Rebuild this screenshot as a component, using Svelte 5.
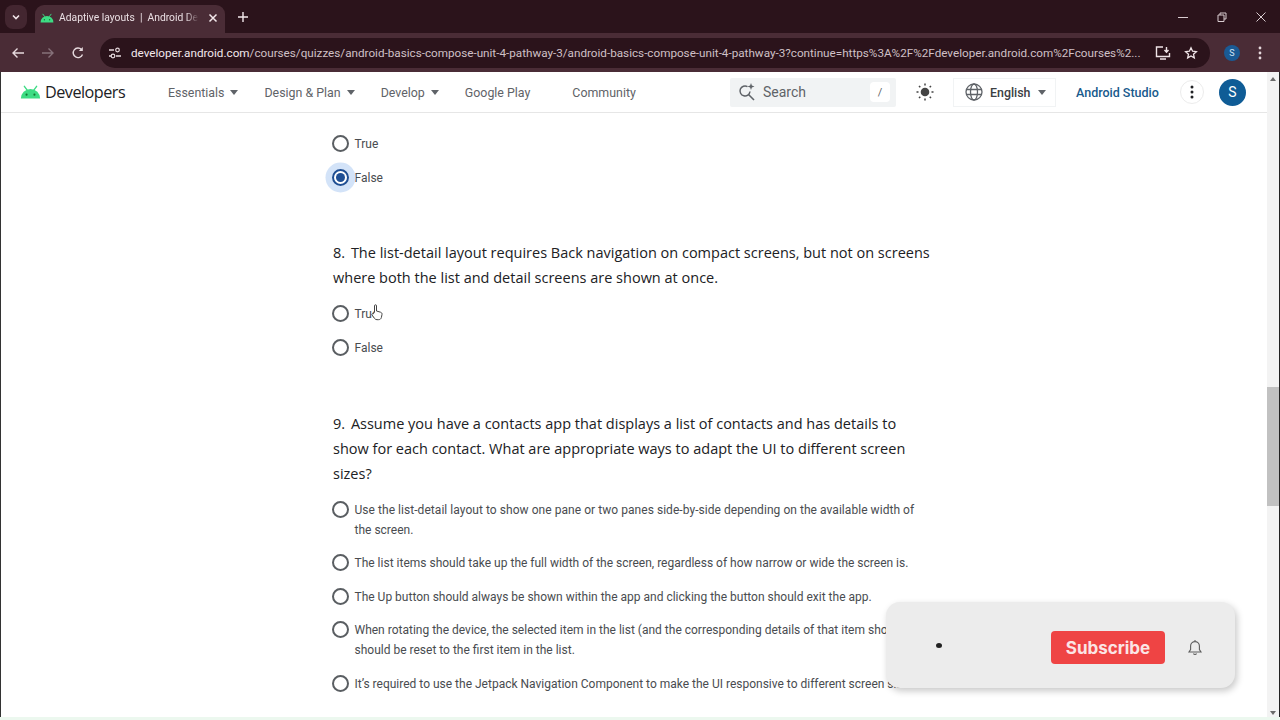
<script>
    const menu = [
        { label: "Essentials", caret: true },
        { label: "Design & Plan", caret: true },
        { label: "Develop", caret: true },
        { label: "Google Play", caret: false },
        { label: "Community", caret: false },
    ];

    const options = [
        { lines: ["Use the list-detail layout to show one pane or two panes side-by-side depending on the available width of", "the screen."] },
        { lines: ["The list items should take up the full width of the screen, regardless of how narrow or wide the screen is."] },
        { lines: ["The Up button should always be shown within the app and clicking the button should exit the app."] },
        { lines: ["When rotating the device, the selected item in the list (and the corresponding details of that item should be retained),", "should be reset to the first item in the list."] },
        { lines: ["It’s required to use the Jetpack Navigation Component to make the UI responsive to different screen sizes."] },
    ];
</script>

{#snippet droid(w, h)}
    <svg width={w} height={h} viewBox="0 0 24 15">
        <path d="M1 15a11 11 0 0 1 22 0z" fill="#3ddc84" />
        <path d="M5 1l3 4M19 1l-3 4" stroke="#3ddc84" stroke-width="1.6" stroke-linecap="round" />
        <circle cx="7.5" cy="10.5" r="1.2" fill="#173" />
        <circle cx="16.5" cy="10.5" r="1.2" fill="#173" />
    </svg>
{/snippet}

{#snippet radio(checked)}
    <span class="radio" class:checked>
        {#if checked}<span class="dot"></span>{/if}
    </span>
{/snippet}

<div class="page">
    <div class="tabstrip">
        <div class="tabsearch">
            <svg width="10" height="10" viewBox="0 0 10 10"><path d="M2 3.5l3 3 3-3" fill="none" stroke="#f0e4e8" stroke-width="1.6" /></svg>
        </div>
        <div class="tab">
            {@render droid(14, 10)}
            <span class="tabtitle">Adaptive layouts&nbsp;&nbsp;|&nbsp;&nbsp;Android Developers</span>
            <svg width="10" height="10" viewBox="0 0 10 10"><path d="M1.5 1.5l7 7M8.5 1.5l-7 7" stroke="#f4e9ec" stroke-width="1.5" /></svg>
        </div>
        <svg class="plus" width="10" height="10" viewBox="0 0 10 10"><path d="M5 0v10M0 5h10" stroke="#f4e9ec" stroke-width="1.4" /></svg>
        <div class="winbtns">
            <svg width="10" height="10" viewBox="0 0 10 10"><path d="M0 5.5h10" stroke="#d9ccd0" stroke-width="1" /></svg>
            <svg width="10" height="10" viewBox="0 0 10 10"><path d="M1 3h6v6.500H1zM3 3V1h6v6H7" fill="none" stroke="#d9ccd0" stroke-width="1" /></svg>
            <svg width="10" height="10" viewBox="0 0 10 10"><path d="M.5.5l9 9M9.500.5l-9 9" stroke="#d9ccd0" stroke-width="1" /></svg>
        </div>
    </div>

    <div class="toolbar">
        <svg width="14" height="14" viewBox="0 0 14 14"><path d="M13 7H2M6.500 2.500L2 7l4.500 4.500" fill="none" stroke="#e6d9dd" stroke-width="1.400" /></svg>
        <svg class="fwd" width="14" height="14" viewBox="0 0 14 14"><path d="M1 7h11M7.500 2.500L12 7l-4.500 4.500" fill="none" stroke="#86717a" stroke-width="1.400" /></svg>
        <svg class="reload" width="14" height="14" viewBox="0 0 14 14"><path d="M11.500 8.500A4.800 4.800 0 1 1 10.500 3.500" fill="none" stroke="#e6d9dd" stroke-width="1.400" /><path d="M11.800 1v4h-4z" fill="#e6d9dd" /></svg>
        <div class="omnibox">
            <span class="tune">
                <svg width="14" height="14" viewBox="0 0 14 14"><path d="M1 4h5M1 10h2M8 10h5" stroke="#e6d9dd" stroke-width="1.300" fill="none" /><circle cx="9.500" cy="4" r="1.800" fill="none" stroke="#e6d9dd" stroke-width="1.200" /><circle cx="5" cy="10" r="1.800" fill="none" stroke="#e6d9dd" stroke-width="1.200" /></svg>
            </span>
            <span class="url"><b>developer.android.com</b>/courses/quizzes/android-basics-compose-unit-4-pathway-3/android-basics-compose-unit-4-pathway-3?continue=https%3A%2F%2Fdeveloper.android.com%2Fcourses%2...</span>
            <svg class="install" width="16" height="14" viewBox="0 0 16 14"><path d="M8 1H1.500v9.500h13V7M11.500 1v5M9.500 4l2 2.200 2-2.200M5 13h6" fill="none" stroke="#efe4e7" stroke-width="1.400" /></svg>
            <svg class="star" width="14" height="14" viewBox="0 0 24 24"><path d="M12 3l2.700 6 6.500.7-4.900 4.300 1.400 6.400L12 17l-5.700 3.400 1.400-6.400-4.900-4.300 6.500-.7z" fill="none" stroke="#efe4e7" stroke-width="2.200" /></svg>
        </div>
        <span class="chromeavatar">S</span>
        <svg class="chromemenu" width="4" height="14" viewBox="0 0 4 14"><circle cx="2" cy="2" r="1.400" fill="#e6d9dd" /><circle cx="2" cy="7" r="1.400" fill="#e6d9dd" /><circle cx="2" cy="12" r="1.400" fill="#e6d9dd" /></svg>
    </div>

    <div class="window">
        <div class="site">
            <header class="sitebar">
                <div class="brand">
                    {@render droid(21, 14)}
                    <span>Developers</span>
                </div>
                <nav class="nav">
                    {#each menu as item}
                        <span class="navitem">
                            {item.label}
                            {#if item.caret}<i class="caret"></i>{/if}
                        </span>
                    {/each}
                </nav>
                <div class="search">
                    <svg width="18" height="18" viewBox="0 0 18 18"><path d="M9.500 3.600A5 5 0 1 0 12 8.500" fill="none" stroke="#5f6368" stroke-width="1.500" /><path d="M10.500 11.500L16 17" stroke="#5f6368" stroke-width="1.600" /><path d="M13 0l.9 2.600 2.600.9-2.600.9L13 7l-.9-2.600-2.600-.9 2.600-.9z" fill="#5f6368" /></svg>
                    <span class="searchlabel">Search</span>
                    <span class="slash">/</span>
                </div>
                <svg class="sun" width="18" height="18" viewBox="0 0 18 18">
                    <circle cx="9" cy="9" r="4.300" fill="#444" />
                    <path d="M9 .5v2M9 15.500v2M.5 9h2M15.500 9h2M3 3l1.300 1.300M13.700 13.700L15 15M3 15l1.300-1.300M13.700 4.300L15 3" stroke="#444" stroke-width="1.500" />
                </svg>
                <div class="lang">
                    <svg width="18" height="18" viewBox="0 0 18 18" fill="none" stroke="#5f6368" stroke-width="1.300"><circle cx="9" cy="9" r="8" /><ellipse cx="9" cy="9" rx="3.500" ry="8" /><path d="M1.500 6.500h15M1.500 11.500h15" /></svg>
                    <span>English</span>
                    <i class="caret"></i>
                </div>
                <span class="studio">Android Studio</span>
                <span class="more">
                    <svg width="4" height="14" viewBox="0 0 4 14"><circle cx="2" cy="2" r="1.500" fill="#202124" /><circle cx="2" cy="7" r="1.500" fill="#202124" /><circle cx="2" cy="12" r="1.500" fill="#202124" /></svg>
                </span>
                <span class="avatar">S</span>
            </header>

            <main class="quiz">
                <div class="options first">
                    <label class="opt">{@render radio(false)}<span>True</span></label>
                    <label class="opt">{@render radio(true)}<span>False</span></label>
                </div>

                <h3 class="question q8">
                    <span class="num">8.</span> The list-detail layout requires Back navigation on compact screens, but not on screens where both the list and detail screens are shown at once.
                </h3>
                <div class="options">
                    <label class="opt">{@render radio(false)}<span>True</span></label>
                    <label class="opt">{@render radio(false)}<span>False</span></label>
                </div>

                <h3 class="question q9">
                    <span class="num">9.</span> Assume you have a contacts app that displays a list of contacts and has details to show for each contact. What are appropriate ways to adapt the UI to different screen sizes?
                </h3>
                <div class="options tight">
                    {#each options as option}
                        <label class="opt">
                            {@render radio(false)}
                            <span class="lines">
                                {#each option.lines as line}
                                    <span class="line">{line}</span>
                                {/each}
                            </span>
                        </label>
                    {/each}
                </div>
            </main>
        </div>

        <div class="scrollbar">
            <i class="arrow up"></i>
            <div class="track"><div class="thumb"></div></div>
            <i class="arrow down"></i>
        </div>

        <!-- cursor over the second True -->
        <svg class="cursor" width="12" height="17" viewBox="0 0 12 17">
            <path d="M3.500 8V1.800a1 1 0 0 1 2 0V7l4 1.200c1 .3 1.700 1 1.500 2.200l-.6 3c-.3 1.500-1.500 2.300-3 2.300H6c-1 0-1.800-.4-2.400-1.200L1 11c-.5-.8.500-1.800 1.400-1.200z" fill="#fff" stroke="#444" stroke-width="1" />
        </svg>

        <div class="subcard">
            <span class="speck"></span>
            <span class="subscribe">Subscribe</span>
            <svg width="16" height="17" viewBox="0 0 16 17"><path d="M2 13h12l-1.600-2.500V7a4.400 4.400 0 0 0-8.800 0v3.500zM6.500 14.500a1.600 1.600 0 0 0 3 0M8 1v1.500" fill="none" stroke="#5c5c5c" stroke-width="1.100" /></svg>
        </div>
    </div>
    <div class="greenline"></div>
</div>

<style>
    :global(body) {
        margin: 0;
        background: #fff;
    }

    .page {
        width: 1280px;
        height: 720px;
        overflow: hidden;
        position: relative;
        display: flex;
        flex-direction: column;
        font-family: Roboto, "Liberation Sans", sans-serif;
    }

    /* browser chrome */
    .tabstrip {
        height: 33px;
        flex: none;
        background: #2b131b;
        display: flex;
        align-items: center;
        padding: 0 14px 0 5px;
        box-sizing: border-box;
    }

    .tabsearch {
        width: 22px;
        height: 24px;
        border-radius: 8px;
        background: #432630;
        display: flex;
        align-items: center;
        justify-content: center;
    }

    .tab {
        width: 190px;
        height: 28px;
        align-self: flex-end;
        margin-left: 8px;
        padding: 0 7px 3px 5px;
        box-sizing: border-box;
        background: #4a2c36;
        border-radius: 9px 9px 0 0;
        display: flex;
        align-items: center;
        gap: 5px;
        color: #eadfe3;
        font-size: 10.300px;
    }

    .tab svg {
        flex: none;
    }

    .tabtitle {
        width: 144px;
        white-space: nowrap;
        overflow: hidden;
        -webkit-mask-image: linear-gradient(to right, #000 88%, transparent 97%);
        mask-image: linear-gradient(to right, #000 88%, transparent 97%);
    }

    .plus {
        margin-left: 13px;
    }

    .winbtns {
        margin-left: auto;
        display: flex;
        gap: 29px;
    }

    .toolbar {
        height: 39px;
        flex: none;
        background: #4a2c36;
        display: flex;
        align-items: center;
        padding: 0 0 0 11px;
        box-sizing: border-box;
    }

    .fwd {
        margin-left: 16px;
    }

    .reload {
        margin-left: 16px;
    }

    .omnibox {
        width: 1110px;
        height: 30px;
        margin-left: 15px;
        border-radius: 15px;
        background: #2b131b;
        display: flex;
        align-items: center;
        box-sizing: border-box;
        padding: 0 12px 0 8px;
        color: #e3d7db;
    }

    .tune {
        display: flex;
        margin-right: 9px;
    }

    .url {
        white-space: nowrap;
        overflow: hidden;
        flex: 1;
        font-size: 11.700px;
        color: #cfc0c6;
    }

    .url b {
        font-weight: 400;
        color: #f2e9ec;
    }

    .install {
        margin: 0 13px 0 12px;
    }

    .chromeavatar {
        width: 16px;
        height: 16px;
        margin-left: 14px;
        border-radius: 50%;
        background: #1a5a94;
        color: #cfe4f5;
        font-size: 9px;
        display: flex;
        align-items: center;
        justify-content: center;
    }

    .chromemenu {
        margin-left: 18px;
    }

    /* page */
    .window {
        flex: 1;
        min-height: 0;
        position: relative;
        display: flex;
    }

    .site {
        flex: 1;
        min-width: 0;
        border-left: 1px solid #333;
        display: flex;
        flex-direction: column;
    }

    .sitebar {
        height: 41px;
        flex: none;
        border-bottom: 1px solid #e6e6e6;
        box-sizing: border-box;
        display: flex;
        align-items: center;
        padding-left: 19px;
        color: #5f6368;
        font-size: 12.400px;
    }

    .brand {
        width: 148px;
        display: flex;
        align-items: center;
        gap: 4px;
        font-family: "Open Sans", sans-serif;
        font-size: 16.200px;
        font-weight: 500;
        letter-spacing: -0.5px;
        color: #202124;
    }

    .nav {
        display: flex;
        gap: 26px;
        width: 562px;
    }

    .navitem {
        display: flex;
        align-items: center;
        gap: 6px;
        white-space: nowrap;
    }

    .navitem:nth-child(4) {
        margin-right: 16px;
    }

    .caret {
        display: inline-block;
        width: 0;
        height: 0;
        border: 4px solid transparent;
        border-top: 5px solid #5f6368;
        border-bottom: 0;
    }

    .search {
        width: 166px;
        height: 29px;
        box-sizing: border-box;
        background: #f1f3f4;
        border-radius: 2px;
        display: flex;
        align-items: center;
        padding: 0 6px 0 8px;
        font-size: 14px;
        color: #5f6368;
    }

    .searchlabel {
        margin-left: 7px;
    }

    .slash {
        margin-left: auto;
        width: 20px;
        height: 20px;
        border-radius: 4px;
        background: #fff;
        font-size: 11px;
        display: flex;
        align-items: center;
        justify-content: center;
    }

    .sun {
        margin-left: 20px;
    }

    .lang {
        width: 103px;
        height: 29px;
        box-sizing: border-box;
        margin-left: 19px;
        border: 1px solid #f1f3f4;
        display: flex;
        align-items: center;
        gap: 7px;
        padding-left: 11px;
        color: #3c4043;
        font-weight: 500;
    }

    .studio {
        margin-left: 20px;
        color: #185a8c;
        font-size: 12.500px;
        font-weight: 500;
        white-space: nowrap;
    }

    .more {
        width: 24px;
        height: 24px;
        box-sizing: border-box;
        margin-left: 21px;
        border: 1px solid #ececec;
        border-radius: 50%;
        display: flex;
        align-items: center;
        justify-content: center;
    }

    .avatar {
        width: 27px;
        height: 27px;
        margin-left: 15px;
        border-radius: 50%;
        background: #0f5c96;
        color: #fff;
        font-size: 14px;
        display: flex;
        align-items: center;
        justify-content: center;
    }

    .quiz {
        flex: 1;
        min-height: 0;
        overflow: hidden;
        padding-left: 332px;
        width: 601px;
    }

    .first {
        padding-top: 21px;
    }

    .options {
        display: flex;
        flex-direction: column;
        gap: 14px;
    }

    .options.tight {
        gap: 13.500px;
    }

    .opt {
        display: flex;
        align-items: flex-start;
        gap: 5.500px;
        font-size: 12px;
        line-height: 20px;
        color: #494c50;
        position: relative;
    }

    .lines {
        display: flex;
        flex-direction: column;
    }

    .line {
        white-space: nowrap;
    }

    .opt:first-child .line:first-child {
        letter-spacing: 0.05px;
    }

    .radio {
        width: 17px;
        height: 17px;
        box-sizing: border-box;
        margin: 1px 0 0 -1px;
        flex: none;
        border: 2px solid #5a5e62;
        border-radius: 50%;
        display: flex;
        align-items: center;
        justify-content: center;
        position: relative;
    }

    .radio.checked {
        border-color: #1f4f94;
        box-shadow: 0 0 0 6.500px #d3e3f8;
    }

    .dot {
        width: 9px;
        height: 9px;
        border-radius: 50%;
        background: #1f4f94;
    }

    .question {
        margin: 0;
        font-family: "Open Sans", Roboto, sans-serif;
        font-size: 14.500px;
        font-weight: 400;
        line-height: 25px;
        color: #202124;
    }

    .q8 {
        margin: 52px 0 14px;
    }

    .q9 {
        margin: 53px 0 13.500px;
    }

    .num {
        margin-right: 2px;
    }

    .scrollbar {
        width: 13px;
        flex: none;
        box-sizing: border-box;
        border-right: 1px solid #222;
        background: #f3f3f3;
        display: flex;
        flex-direction: column;
        align-items: center;
    }

    .track {
        flex: 1;
        width: 100%;
        padding-top: 301px;
        box-sizing: border-box;
    }

    .thumb {
        height: 119px;
        background: #c1c1c1;
    }

    .arrow {
        width: 0;
        height: 0;
        margin: 5px 0;
        border: 3.500px solid transparent;
    }

    .arrow.up {
        border-bottom: 4px solid #6a6a6a;
        border-top: 0;
    }

    .arrow.down {
        border-top: 4px solid #6a6a6a;
        border-bottom: 0;
    }

    .cursor {
        position: absolute;
        left: 371px;
        top: 232px;
    }

    .subcard {
        position: absolute;
        left: 886px;
        top: 530px;
        width: 349px;
        height: 86px;
        box-sizing: border-box;
        padding: 5px 32px 0 165px;
        background: #ececec;
        border-radius: 14px;
        box-shadow: 2px 3px 7px rgba(0, 0, 0, 0.22);
        display: flex;
        align-items: center;
        justify-content: space-between;
    }

    .speck {
        position: absolute;
        left: 50px;
        top: 41px;
        width: 6px;
        height: 5px;
        border-radius: 50%;
        background: #222;
    }

    .subscribe {
        width: 114px;
        height: 33px;
        border-radius: 4px;
        background: #ef4444;
        color: #fbe5e5;
        font-family: Inter, sans-serif;
        font-size: 17px;
        font-weight: 700;
        display: flex;
        align-items: center;
        justify-content: center;
    }

    .greenline {
        position: absolute;
        left: 0;
        right: 0;
        bottom: 0;
        height: 3px;
        background: #ecf8ef;
    }
</style>
